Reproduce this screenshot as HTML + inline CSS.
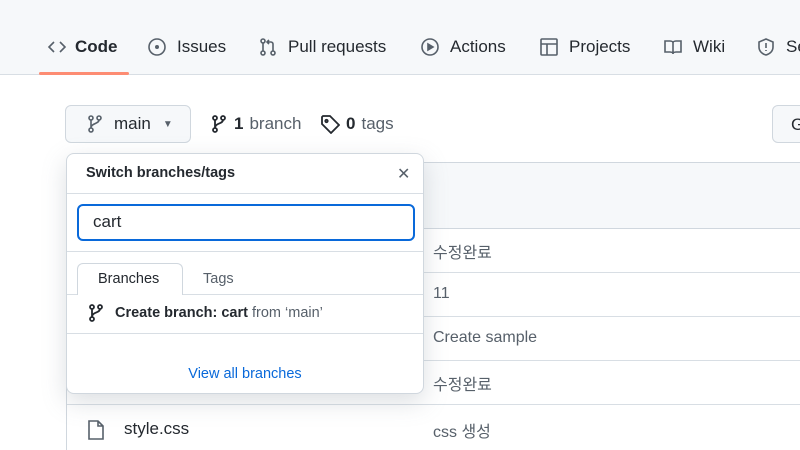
<!DOCTYPE html>
<html><head><meta charset="utf-8"><style>
*{box-sizing:border-box;margin:0;padding:0}
html,body{width:800px;height:450px;overflow:hidden}
body{background:#fff;font-family:"Liberation Sans","Noto Sans CJK KR",sans-serif;color:#24292f;position:relative}
.nav{position:absolute;left:0;top:0;width:800px;height:75px;background:#f6f8fa;border-bottom:1px solid #d8dee4}
.nav .it{position:absolute;top:37px;font-size:17px;display:flex;align-items:center;gap:10px;color:#24292f}
.nav svg{width:20px;height:20px;fill:none;stroke:#57606a;stroke-width:1.6}
.ul{position:absolute;left:39px;top:72px;width:90px;height:3px;background:#fd8c73;border-radius:2px}
.btn{position:absolute;left:65px;top:105px;width:126px;height:38px;border:1px solid #d0d7de;border-radius:6px;background:#f6f8fa;font-size:17px;display:flex;align-items:center;padding-left:20px;gap:10px}
.meta{position:absolute;top:114px;font-size:17px;color:#57606a;display:flex;align-items:center;gap:6px}
.meta b{color:#24292f}
.gbtn{position:absolute;left:772px;top:105px;width:60px;height:38px;border:1px solid #d0d7de;border-radius:6px;background:#f6f8fa;font-size:17px;padding:9px 0 0 18px}
.tbl{position:absolute;left:66px;top:162px;width:760px;height:300px;border:1px solid #d0d7de;border-radius:6px}
.hdr{height:66px;background:#f6f8fa;border-bottom:1px solid #d0d7de}
.row{position:absolute;left:0;width:760px;height:44px;border-bottom:1px solid #d8dee4;font-size:16px}
.row span{position:absolute;left:366px;top:10px;color:#57606a}
.dd{position:absolute;left:66px;top:153px;width:358px;height:241px;background:#fff;border:1px solid #d0d7de;border-radius:8px;box-shadow:0 8px 24px rgba(140,149,159,.3)}
.dd .t{position:absolute;left:19px;top:11px;font-size:14.5px;font-weight:bold}
.dd .x{position:absolute;left:330px;top:10px;font-size:16px;color:#57606a}
.line{position:absolute;left:0;width:356px;height:1px;background:#d8dee4}
.inp{position:absolute;left:10px;top:50px;width:338px;height:37px;border:2px solid #0969da;border-radius:6px;font-size:17px;padding:6px 0 0 14px}
.tab{position:absolute;left:10px;top:109px;width:106px;height:32px;border:1px solid #d0d7de;border-bottom:none;border-radius:6px 6px 0 0;background:#fff;font-size:14.5px;padding:7px 0 0 20px}
</style></head><body>
<div class="nav">
 <div class="it" style="left:47px"><svg viewBox="0 0 20 20"><path d="M7 5L2 10l5 5M13 5l5 5-5 5"/></svg><b style="margin-left:-2px">Code</b></div>
 <div class="it" style="left:147px"><svg viewBox="0 0 20 20"><circle cx="10" cy="10" r="8"/><circle cx="10" cy="10" r="1.2" fill="#57606a"/></svg>Issues</div>
 <div class="it" style="left:258px"><svg viewBox="0 0 20 20"><circle cx="5" cy="4" r="2"/><circle cx="5" cy="16" r="2"/><circle cx="15" cy="16" r="2"/><path d="M5 6v8M15 14V7c0-1-1-2-2-2h-3M11 3l-2 2 2 2"/></svg>Pull requests</div>
 <div class="it" style="left:420px"><svg viewBox="0 0 20 20"><circle cx="10" cy="10" r="8"/><path d="M8 7v6l5-3z" fill="#57606a"/></svg>Actions</div>
 <div class="it" style="left:539px"><svg viewBox="0 0 20 20"><rect x="2" y="2" width="16" height="16" rx="1"/><path d="M2 7h16M8 7v11"/></svg>Projects</div>
 <div class="it" style="left:663px"><svg viewBox="0 0 20 20"><path d="M2 4h5c2 0 3 1 3 2v11c0-1-1-2-3-2H2zM18 4h-5c-2 0-3 1-3 2v11c0-1 1-2 3-2h5z"/></svg>Wiki</div>
 <div class="it" style="left:756px"><svg viewBox="0 0 20 20"><path d="M10 2l7 3v5c0 4-3 7-7 8-4-1-7-4-7-8V5z"/><path d="M10 6v5M10 13v1"/></svg>Se</div>
</div>
<div class="ul"></div>
<div class="btn"><svg width="18" height="20" viewBox="0 0 18 20" fill="none" stroke="#57606a" stroke-width="1.6"><circle cx="5" cy="4" r="2"/><circle cx="13" cy="4" r="2"/><circle cx="5" cy="16" r="2"/><path d="M5 6v8M13 6c0 4-8 3-8 8"/></svg>main <span style="font-size:10px;color:#57606a;margin-left:2px">▼</span></div>
<div class="meta" style="left:210px"><svg width="18" height="20" viewBox="0 0 18 20" fill="none" stroke="#24292f" stroke-width="1.8"><circle cx="5" cy="4" r="2"/><circle cx="13" cy="4" r="2"/><circle cx="5" cy="16" r="2"/><path d="M5 6v8M13 6c0 4-8 3-8 8"/></svg><b>1</b> branch</div>
<div class="meta" style="left:320px"><svg width="20" height="20" viewBox="0 0 20 20" fill="none" stroke="#24292f" stroke-width="1.8"><path d="M2 3v7l9 9 8-8-9-9H3z"/><circle cx="6.5" cy="7" r="1.2"/></svg><b>0</b> tags</div>
<div class="gbtn">G</div>
<div class="tbl"><div class="hdr"></div>
 <div class="row" style="top:66px"><span>수정완료</span></div>
 <div class="row" style="top:110px"><span style="top:12px">11</span></div>
 <div class="row" style="top:154px"><span style="top:12px">Create sample</span></div>
 <div class="row" style="top:198px"><span>수정완료</span></div>
 <div class="row" style="top:243px;border:none"><svg style="position:absolute;left:20px;top:13px" width="18" height="22" viewBox="0 0 18 22" fill="none" stroke="#57606a" stroke-width="1.6"><path d="M2 2h9l5 5v13H2zM11 2v5h5"/></svg><b style="position:absolute;left:57px;top:13px;font-weight:normal;color:#24292f;font-size:17px">style.css</b><span style="top:12px">css 생성</span></div>
</div>
<div class="dd">
 <div class="t">Switch branches/tags</div><div class="x">✕</div>
 <div class="line" style="top:39px"></div>
 <div class="inp">cart</div>
 <div class="line" style="top:97px"></div>
 <div class="line" style="top:140px"></div>
 <div class="tab">Branches</div>
 <div style="position:absolute;left:136px;top:117px;font-size:14.5px;color:#57606a">Tags</div>
 <svg style="position:absolute;left:20px;top:149px" width="18" height="20" viewBox="0 0 18 20" fill="none" stroke="#24292f" stroke-width="1.8"><circle cx="5" cy="4" r="2"/><circle cx="13" cy="4" r="2"/><circle cx="5" cy="16" r="2"/><path d="M5 6v8M13 6c0 4-8 3-8 8"/></svg>
 <div style="position:absolute;left:48px;top:151px;font-size:14.5px"><b>Create branch: cart</b> <span style="color:#57606a">from ‘main’</span></div>
 <div class="line" style="top:179px"></div>
 <div style="position:absolute;left:0;width:356px;top:212px;text-align:center;font-size:14.5px;color:#0969da">View all branches</div>
</div>
</body></html>
